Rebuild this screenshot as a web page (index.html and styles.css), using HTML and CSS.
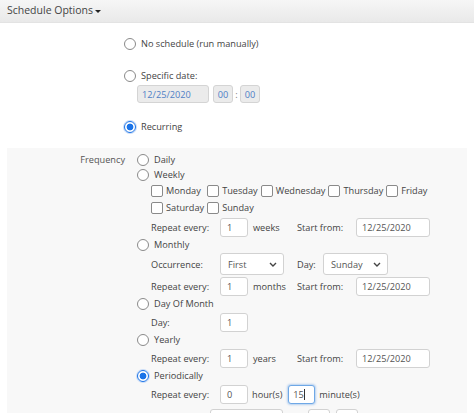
FILE: index.html
```html
<!DOCTYPE html>
<html>
<head>
<meta charset="utf-8">
<link rel="stylesheet" href="styles.css">
</head>
<body>
<div class="header">Schedule Options <span class="caret"></span></div>
<div class="top">
  <div class="opt"><span class="radio"></span><span>No schedule (run manually)</span></div>
  <div class="opt spec"><span class="radio"></span><span>Specific date:</span></div>
  <div class="dt">
    <span class="field dis tdate">12/25/2020</span>
    <span class="field dis tm">00</span><span class="colon">:</span><span class="field dis tm">00</span>
  </div>
  <div class="opt rec"><span class="radio on"></span><span>Recurring</span></div>
</div>
<div class="panel">
  <div class="plabel">Frequency</div>
  <div class="pbody">
    <div class="opt"><span class="radio"></span><span>Daily</span></div>
    <div class="opt"><span class="radio"></span><span>Weekly</span></div>
    <div class="days">
      <div class="day"><span class="cb"></span><span>Monday</span></div>
      <div class="day"><span class="cb"></span><span>Tuesday</span></div>
      <div class="day"><span class="cb"></span><span>Wednesday</span></div>
      <div class="day"><span class="cb"></span><span>Thursday</span></div>
      <div class="day"><span class="cb"></span><span>Friday</span></div>
      <div class="day"><span class="cb"></span><span>Saturday</span></div>
      <div class="day"><span class="cb"></span><span>Sunday</span></div>
    </div>
    <div class="sub">
      <span class="sl">Repeat every:</span><span class="field num">1</span><span class="unit">weeks</span>
      <span class="sf">Start from:</span><span class="field date">12/25/2020</span>
    </div>
    <div class="opt"><span class="radio"></span><span>Monthly</span></div>
    <div class="sub selrow">
      <span class="sl">Occurrence:</span>
      <span class="select occ"><span>First</span><svg class="chev" viewBox="0 0 8 5" width="8" height="5"><path d="M1 1l3 3 3-3" fill="none" stroke="#444" stroke-width="1.4"/></svg></span>
      <span class="dl">Day:</span>
      <span class="select dsel"><span>Sunday</span><svg class="chev" viewBox="0 0 8 5" width="8" height="5"><path d="M1 1l3 3 3-3" fill="none" stroke="#444" stroke-width="1.4"/></svg></span>
    </div>
    <div class="sub">
      <span class="sl">Repeat every:</span><span class="field num">1</span><span class="unit">months</span>
      <span class="sf">Start from:</span><span class="field date">12/25/2020</span>
    </div>
    <div class="opt"><span class="radio"></span><span>Day Of Month</span></div>
    <div class="sub">
      <span class="sl">Day:</span><span class="field num">1</span>
    </div>
    <div class="opt"><span class="radio"></span><span>Yearly</span></div>
    <div class="sub">
      <span class="sl">Repeat every:</span><span class="field num">1</span><span class="unit">years</span>
      <span class="sf">Start from:</span><span class="field date">12/25/2020</span>
    </div>
    <div class="opt"><span class="radio on"></span><span>Periodically</span></div>
    <div class="sub">
      <span class="sl">Repeat every:</span><span class="field num">0</span><span class="punit">hour(s)</span>
      <span class="field num focus">15<span class="cursor"></span></span><span class="punit2">minute(s)</span>
    </div>
    <div class="sub last">
      <span class="sf"></span><span class="field pdate"></span>
      <span class="field ptm"></span><span class="gap6"></span><span class="field ptm"></span>
    </div>
  </div>
</div>
</body>
</html>
```
FILE: styles.css
```css
* { box-sizing: border-box; }
body {
  margin: 0;
  font-family: "Open Sans", "Liberation Sans", sans-serif;
  font-size: 9.2px;
  color: #444;
  background: #fff;
}
.header {
  height: 23px;
  background: linear-gradient(#f6f6f6, #e9e9e9);
  border-bottom: 1px solid #e3e3e3;
  padding-left: 7px;
  font-size: 10.5px;
  line-height: 21px;
  color: #444;
}
.caret {
  display: inline-block;
  border-left: 3px solid transparent;
  border-right: 3px solid transparent;
  border-top: 3px solid #222;
  vertical-align: middle;
  margin-left: -1px;
}
.top { padding: 13px 0 0 124px; }
.opt {
  display: flex;
  align-items: center;
  height: 15px;
  gap: 5px;
}
.spec { margin-top: 17px; }
.rec { margin-top: 16px; }
.radio {
  width: 12px;
  height: 12px;
  border: 1px solid #8a8a8a;
  border-radius: 50%;
  background: #fff;
  flex: none;
}
.radio.on {
  border-color: #1a73e8;
  background: radial-gradient(circle, #1a73e8 0 3.1px, #fff 3.7px);
  box-shadow: 0 0 0 1px #c9dcf7;
}
.dt {
  display: flex;
  align-items: center;
  margin-top: 2px;
  padding-left: 13px;
}
.field {
  display: flex;
  align-items: center;
  height: 19px;
  border: 1px solid #d2d2d2;
  border-radius: 3px;
  background: #fff;
  padding: 0 5px;
  color: #555;
  flex: none;
}
.dis {
  height: 18px;
  background: #ebebeb;
  border-color: #d4d4d4;
  color: #4f80c6;
}
.tdate { width: 72px; padding-left: 4px; margin-right: 4px; }
.tm { width: 20px; justify-content: center; padding: 0; }
.colon { width: 7px; text-align: center; color: #777; }
.panel {
  margin: 14px 7px 0;
  background: #f8f8f8;
  display: flex;
  padding: 4px 0 20px;
}
.plabel {
  width: 118px;
  text-align: right;
  line-height: 15px;
  color: #555;
  flex: none;
}
.pbody { margin-left: 12px; }
.days {
  display: grid;
  grid-template-columns: repeat(5, auto);
  column-gap: 3px;
  padding-left: 14px;
  justify-content: start;
}
.day {
  display: flex;
  align-items: center;
  gap: 3px;
  height: 17px;
}
.cb {
  width: 12px;
  height: 12px;
  border: 1px solid #8a8a8a;
  border-radius: 2px;
  background: #fff;
  flex: none;
}
.sub {
  display: flex;
  align-items: center;
  height: 19px;
  margin-top: 2px;
  padding-left: 14px;
}
.selrow { height: 22px; margin-top: 1px; }
.sl { width: 69px; flex: none; }
.num { width: 28px; padding-left: 6px; }
.unit { width: 49px; padding-left: 5px; flex: none; }
.sf { width: 59px; flex: none; }
.date { width: 74px; }
.select {
  display: flex;
  align-items: center;
  justify-content: space-between;
  height: 22px;
  border: 1px solid #d2d2d2;
  border-radius: 3px;
  background: #fff;
  padding: 0 6px 0 7px;
  color: #555;
  flex: none;
}
.occ { width: 64px; }
.dl { width: 26px; margin-left: 13px; flex: none; }
.dsel { width: 65px; }
.chev { display: block; }
.punit { margin: 0 6px 0 4px; }
.focus {
  width: 27px;
  padding-left: 4px;
  border-color: #6fa8e6;
  box-shadow: 0 0 2px 1px rgba(102, 160, 230, 0.45);
}
.cursor {
  display: inline-block;
  width: 1px;
  height: 11px;
  background: #333;
  margin-left: 0.5px;
}
.punit2 { margin-left: 4px; }
.last { margin-top: 5px; }
.pdate { width: 73px; margin-right: 25px; }
.ptm { width: 22px; }
.gap6 { width: 6px; flex: none; }
```
